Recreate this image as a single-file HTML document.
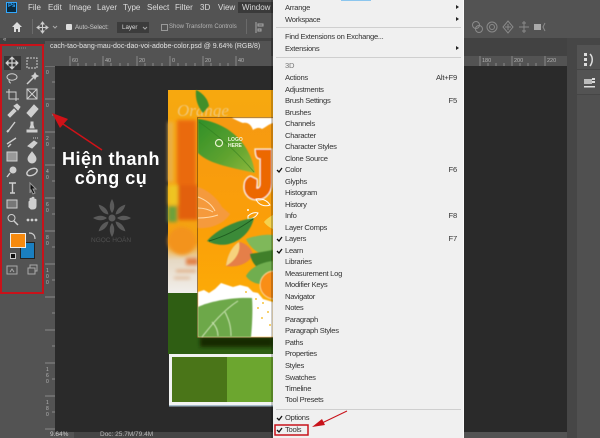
<!DOCTYPE html>
<html><head><meta charset="utf-8">
<style>
html,body{margin:0;padding:0;background:#fff}
#r{position:relative;width:600px;height:438px;overflow:hidden;background:#535353;font-family:"Liberation Sans",sans-serif;filter:blur(.3px)}
#r div{position:absolute}
.t{white-space:nowrap;color:#ddd;font-size:8px}
.m{position:absolute;left:285px;white-space:nowrap;font-size:7.6px;letter-spacing:-.28px;color:#333;line-height:10px}
.k{position:absolute;right:143px;font-size:7.6px;letter-spacing:-.2px;color:#333;line-height:10px}
.sep{left:276px;width:185px;height:1px;background:#cfcfcf}
.mb{top:3px;color:#ddd;font-size:8px;white-space:nowrap}
svg{position:absolute}
</style></head><body>
<div id="r">
<!-- menu bar -->
<div style="left:0;top:0;width:600px;height:15px;background:#535353"></div>
<div style="left:6px;top:2px;width:9px;height:9px;background:#0b2a3e;border:1px solid #31a8ff"></div>
<div class="t" style="left:8px;top:3px;font-size:6px;font-weight:bold;color:#31a8ff">Ps</div>
<div class="mb" style="left:28px">File</div>
<div class="mb" style="left:48px">Edit</div>
<div class="mb" style="left:69px">Image</div>
<div class="mb" style="left:97px">Layer</div>
<div class="mb" style="left:123px">Type</div>
<div class="mb" style="left:147px">Select</div>
<div class="mb" style="left:175px">Filter</div>
<div class="mb" style="left:200px">3D</div>
<div class="mb" style="left:218px">View</div>
<div style="left:238px;top:2px;width:35px;height:11px;background:#3a3a3a"></div>
<div class="mb" style="left:242px">Window</div>
<!-- options bar -->
<div style="left:0;top:15px;width:600px;height:23px;background:#535353"></div>
<svg style="left:11px;top:21px" width="12" height="12" viewBox="0 0 12 12"><path d="M6 1L1 6h2v5h2V8h2v3h2V6h2z" fill="#ddd"/></svg>
<div style="left:32px;top:19px;width:1px;height:15px;background:#6a6a6a"></div>
<svg style="left:36px;top:21px" width="13" height="13" viewBox="0 0 13 13"><path d="M6.500 1v11M1 6.500h11M6.500 1L5 3h3zM6.500 12L5 10h3zM1 6.500L3 5v3zM12 6.500L10 5v3z" stroke="#ccc" stroke-width="1" fill="#ccc"/></svg>
<svg style="left:52px;top:25px" width="6" height="5" viewBox="0 0 6 5"><path d="M1 1l2 2 2-2" stroke="#aaa" fill="none"/></svg>
<div style="left:66px;top:24px;width:6px;height:6px;background:#ddd;border-radius:1px"></div>
<div class="t" style="left:75px;top:24px;font-size:6.200px;color:#ccc">Auto-Select:</div>
<div style="left:117px;top:22px;width:32px;height:11px;background:#3c3c3c"></div>
<div class="t" style="left:122px;top:24px;font-size:6.200px">Layer</div>
<svg style="left:142px;top:26px" width="6" height="5" viewBox="0 0 6 5"><path d="M1 1l2 2 2-2" stroke="#aaa" fill="none"/></svg>
<div style="left:161px;top:24px;width:5px;height:5px;border:1px solid #999"></div>
<div class="t" style="left:169px;top:24px;font-size:6px;color:#b5b5b5">Show Transform Controls</div>
<div style="left:246px;top:19px;width:1px;height:15px;background:#6a6a6a"></div>
<svg style="left:255px;top:22px" width="10" height="11" viewBox="0 0 10 11"><path d="M1 0v11M3 2h5v2H3zM3 7h3v2H3z" stroke="#aaa" fill="none"/></svg>
<!-- 3D icons -->
<svg style="left:470px;top:20px" width="80" height="14" viewBox="0 0 80 14" fill="none" stroke="#8a8a8a" stroke-width="1">
<circle cx="6" cy="5" r="3.500"/><circle cx="9" cy="9" r="3.500"/>
<circle cx="22" cy="7" r="5"/><circle cx="22" cy="7" r="2.500"/>
<path d="M38 1l5 6-5 6-5-6zM38 4v6M35 7h6"/>
<path d="M49 7h10M54 1v12M52 3h4M52 11h4"/>
<rect x="64" y="4" width="7" height="6" fill="#aaa" stroke="none"/><path d="M75 3l-2 4 2 4"/>
</svg>
<!-- tab bar -->
<div style="left:45px;top:38px;width:522px;height:18px;background:#424242"></div>
<div style="left:45px;top:41px;width:226px;height:15px;background:#535353"></div>
<div class="t" style="left:50px;top:43px;font-size:7px;color:#e2e2e2">cach-tao-bang-mau-doc-dao-voi-adobe-color.psd @ 9.64% (RGB/8)</div>
<!-- rulers -->
<div style="left:45px;top:56px;width:522px;height:10px;background:#535353"></div>
<div style="left:45px;top:56px;width:10px;height:376px;background:#535353"></div>
<svg style="left:45px;top:56px" width="522" height="10" viewBox="0 0 522 10" stroke="#8a8a8a" stroke-width="1">
<path d="M25 0v10M58 0v10M92 0v10M125 0v10M158 0v10M191 0v10M435 0v10M467 0v10M500 0v10M33 7v3M41 7v3M50 7v3M66 7v3M75 7v3M83 7v3M100 7v3M108 7v3M117 7v3M133 7v3M141 7v3M150 7v3M166 7v3M175 7v3M183 7v3M443 7v3M451 7v3M459 7v3M475 7v3M483 7v3M491 7v3"/>
<g fill="#b5b5b5" stroke="none" font-size="5.500" font-family="Liberation Sans"><text x="27" y="6">60</text><text x="60" y="6">40</text><text x="94" y="6">20</text><text x="127" y="6">0</text><text x="160" y="6">20</text><text x="193" y="6">40</text><text x="437" y="6">180</text><text x="469" y="6">200</text><text x="502" y="6">220</text></g>
</svg>
<svg style="left:45px;top:66px" width="10" height="366" viewBox="0 0 10 366" stroke="#8a8a8a">
<path d="M0 0h10M0 33h10M0 66h10M0 99h10M0 132h10M0 165h10M0 198h10M0 231h10M0 264h10M0 297h10M0 330h10M0 363h10M7 16h3M7 49h3M7 82h3M7 115h3M7 148h3M7 181h3M7 214h3M7 247h3M7 280h3M7 313h3M7 346h3"/>
<g fill="#b5b5b5" stroke="none" font-size="5" font-family="Liberation Sans"><text x="1" y="8">0</text><text x="1" y="41">0</text><text x="1" y="74">2</text><text x="1" y="80">0</text><text x="1" y="107">4</text><text x="1" y="113">0</text><text x="1" y="140">6</text><text x="1" y="146">0</text><text x="1" y="173">8</text><text x="1" y="179">0</text><text x="1" y="206">1</text><text x="1" y="212">0</text><text x="1" y="218">0</text><text x="1" y="305">1</text><text x="1" y="311">6</text><text x="1" y="317">0</text><text x="1" y="338">1</text><text x="1" y="344">8</text><text x="1" y="350">0</text></g>
</svg>
<!-- canvas -->
<div style="left:55px;top:66px;width:512px;height:366px;background:#2a2a2a"></div>
<!-- artwork -->
<svg style="left:160px;top:85px" width="113" height="325" viewBox="160 85 113 325">
<defs>
<filter id="b1" x="-30%" y="-30%" width="160%" height="160%"><feGaussianBlur stdDeviation="1.800"/></filter>
<filter id="b2" x="-20%" y="-20%" width="140%" height="140%"><feGaussianBlur stdDeviation=".6"/></filter>
<linearGradient id="lf" x1="0" y1="0" x2="1" y2="1"><stop offset="0" stop-color="#2f8f2a"/><stop offset=".6" stop-color="#5fa32f"/><stop offset="1" stop-color="#8fb93c"/></linearGradient>
<linearGradient id="fr" x1="0" y1="0" x2="0" y2="1"><stop offset="0" stop-color="#f69a12"/><stop offset=".5" stop-color="#fb9f08"/><stop offset="1" stop-color="#fcb106"/></linearGradient>
<linearGradient id="bk" x1="0" y1="0" x2="0" y2="1"><stop offset="0" stop-color="#f7a80f"/><stop offset=".75" stop-color="#f4a112"/><stop offset=".84" stop-color="#e6d9c4"/><stop offset="1" stop-color="#f1efec"/></linearGradient>
</defs>
<rect x="160" y="85" width="113" height="325" fill="#2a2a2a"/>
<!-- green bg -->
<rect x="168" y="292" width="105" height="62" fill="#2f5e13"/>
<rect x="200" y="337" width="73" height="10" fill="#122a06" filter="url(#b1)"/>
<!-- back doc -->
<rect x="168" y="90" width="105" height="203" fill="url(#bk)"/>
<g filter="url(#b1)">
<rect x="177" y="120" width="19" height="65" fill="#ea6a0e"/>
<rect x="178" y="185" width="20" height="35" fill="#e2600c"/>
<rect x="168" y="122" width="5" height="60" fill="#e8b04c"/>
<rect x="168" y="185" width="10" height="20" fill="#eec421"/>
<rect x="168" y="206" width="9" height="16" fill="#6da03a"/>
<circle cx="182" cy="241" r="14" fill="#f3931c"/>
<rect x="186" y="258" width="12" height="7" fill="#e2824a"/>
<rect x="176" y="270" width="20" height="2" fill="#dc9a68"/>
<rect x="174" y="277" width="16" height="2" fill="#dcae88"/>
</g>
<text x="177" y="116" font-size="17" font-family="Liberation Serif" font-style="italic" fill="#ecd4a4" opacity=".7" filter="url(#b2)">Orange</text>
<path d="M196 90c5 2 12 8 13 16-3 3-5 6-6 7-5-6-8-14-7-23z" fill="#3f8f2a" filter="url(#b2)"/>
<!-- front doc -->
<rect x="197" y="117" width="76" height="221" fill="#7a4a10" opacity=".7"/>
<rect x="198" y="118" width="75" height="219" fill="url(#fr)"/>
<!-- top splatter -->
<path d="M232 118h41v5c-4 1-7 4-11 6-3-2-6-1-9 1-2-6-6-8-10-7-3-1-7-3-11-5z" fill="#fff" filter="url(#b2)"/>
<!-- leaf -->
<path d="M198 119C225 122 250 140 255 173C235 168 210 165 198 153z" fill="url(#lf)" filter="url(#b2)"/>
<path d="M199 122c20 14 40 32 55 50" stroke="#2e7a1e" fill="none" opacity=".5"/>
<circle cx="219" cy="143" r="3.500" fill="none" stroke="#e8f3d0" stroke-width="1.200"/>
<text x="228" y="141" font-size="5" font-weight="bold" fill="#eef6dc" font-family="Liberation Sans">LOGO</text>
<text x="228" y="147" font-size="5" font-weight="bold" fill="#eef6dc" font-family="Liberation Sans">HERE</text>
<!-- J -->
<path d="M255 149h17v34c0 12-9 18-17 17-8-1-12-8-11-15 0-5 4-9 7-9l6 3c1 1 0 8 0 9 2 0 3-2 3-4v-25c-3 0-5-2-5-10z" fill="#ec6704" stroke="#fbeedd" stroke-width="1.300" filter="url(#b2)"/>
<path d="M256 199c5-1 11 1 14 6-5 2-12 0-14-6z" fill="none" stroke="#fff"/>
<path d="M248 216c3-3 7-4 10-3-2 4-6 6-10 6z" fill="none" stroke="#fff"/>
<circle cx="248" cy="210" r="1" fill="#fff"/>
<!-- orange slice -->
<path d="M198 187c10 3 20 12 24 20l8 7c-6 10-20 15-32 14z" fill="#f59a3c" filter="url(#b2)"/>
<path d="M198 197c8 3 14 8 17 14M198 208c6 0 12 2 15 4M198 218c8 0 14-1 20-3" stroke="#ffd9a8" fill="none" stroke-width="1"/>
<!-- leaf 2 -->
<path d="M207 241c10-12 30-21 47-23-3 12-11 22-25 26-8 2-16 0-22-3z" fill="#3a8a38" filter="url(#b2)"/>
<path d="M209 241c14-4 30-12 44-22" stroke="#1f5d20" fill="none"/>
<!-- slice small -->
<path d="M226 266c2-12 8-20 14-24 7 2 12 7 13 13-4 8-15 13-27 11z" fill="#e57f48" filter="url(#b2)"/>
<path d="M226 266c1-10 6-20 13-24 2 8-2 18-13 24z" fill="#f7d27c" filter="url(#b2)"/>
<!-- right leaves -->
<path d="M246 239c8-3 20-5 27-4v22c-10 0-22-7-27-18z" fill="#7fb85a" filter="url(#b2)"/>
<path d="M250 254l23-4v24c-10 0-21-8-23-20z" fill="#3f7f2a" filter="url(#b2)"/>
<path d="M246 276c4-8 15-14 27-15v22c-10 3-22 1-27-7z" fill="#6fae50" filter="url(#b2)"/>
<circle cx="274" cy="285" r="14" fill="#f98e12" stroke="#fcd48a" filter="url(#b2)"/>
<path d="M264 222c3-4 9-7 9-7v14c-3-1-7-4-9-7z" fill="#f4d24e"/>
<!-- white lower -->
<path d="M198 292l6-2 5 3 6-4 6-6 6 2 6 2 7-2 8 2 5 5 5 1 5 6 10 3v35h-75z" fill="#fff" filter="url(#b2)"/>
<g fill="#f6c440"><circle cx="263" cy="303" r="1"/><circle cx="258" cy="308" r="1"/><circle cx="268" cy="312" r="1"/><circle cx="262" cy="318" r="1"/><circle cx="270" cy="325" r="1"/><circle cx="256" cy="299" r="1"/><circle cx="246" cy="292" r="1"/></g>
<!-- large bottom leaf -->
<path d="M198 307c12-6 36-10 54-9 1 12 0 28-1 39h-53z" fill="#6da84a" filter="url(#b2)"/>
<path d="M202 337c8-10 20-26 36-36M225 312c4 8 6 14 6 24M212 322c4 4 6 8 6 14" stroke="#cfe6b8" stroke-width="1" fill="none" filter="url(#b2)"/>
<!-- swatches -->
<rect x="169" y="354" width="104" height="51" fill="#f2f3f2"/>
<rect x="172" y="357" width="55" height="45" fill="#4a7518"/>
<rect x="227" y="357" width="46" height="45" fill="#6ca62f"/>
<rect x="169" y="405" width="104" height="1.500" fill="#a6bccb"/>
</svg>
<!-- watermark -->
<svg style="left:92px;top:198px" width="40" height="40" viewBox="-20 -20 40 40" fill="#5a5a5a">
<circle r="3.500"/>
<path d="M0-5c-3-4-3-9 0-14 3 5 3 10 0 14z"/>
<path d="M0-5c-3-4-3-9 0-14 3 5 3 10 0 14z" transform="rotate(45)"/>
<path d="M0-5c-3-4-3-9 0-14 3 5 3 10 0 14z" transform="rotate(90)"/>
<path d="M0-5c-3-4-3-9 0-14 3 5 3 10 0 14z" transform="rotate(135)"/>
<path d="M0-5c-3-4-3-9 0-14 3 5 3 10 0 14z" transform="rotate(180)"/>
<path d="M0-5c-3-4-3-9 0-14 3 5 3 10 0 14z" transform="rotate(225)"/>
<path d="M0-5c-3-4-3-9 0-14 3 5 3 10 0 14z" transform="rotate(270)"/>
<path d="M0-5c-3-4-3-9 0-14 3 5 3 10 0 14z" transform="rotate(315)"/>
</svg>
<div class="t" style="left:91px;top:237px;font-size:6.500px;color:#505050">NGỌC HOÀN</div>
<!-- label -->
<div style="left:50px;top:150px;width:122px;text-align:center;color:#fff;font-weight:bold;font-size:18px;letter-spacing:.5px;line-height:19px">Hiện thanh<br>công cụ</div>
<!-- red arrow -->
<svg style="left:45px;top:105px" width="60" height="50" viewBox="45 105 60 50"><path d="M102 150L60 122" stroke="#d01218" stroke-width="1.500"/><path d="M52 113l16 6-8 9z" fill="#d01218"/></svg>
<!-- toolbar -->
<div style="left:0;top:38px;width:45px;height:394px;background:#535353"></div>
<div style="left:0;top:38px;width:45px;height:6px;background:#424242"></div>
<div class="t" style="left:3px;top:37px;font-size:6px;color:#bbb">«</div>
<div style="left:0;top:44px;width:44px;height:250px;border:2px solid #c8121a;box-sizing:border-box;background:#535353"></div>
<div style="left:4px;top:56px;width:17px;height:14px;background:#383838"></div>
<svg style="left:0;top:44px" width="45" height="250" viewBox="0 44 45 250" fill="none" stroke="#cfcfcf" stroke-width="1">
<path d="M17 48h10" stroke="#8a8a8a" stroke-dasharray="1 1"/>
<!-- move / marquee -->
<path d="M12 58v10M7 63h10" stroke-width="1.200"/><path d="M12 57l-2 2h4zM12 69l-2-2h4zM6 63l2-2v4zM18 63l-2-2v4z" fill="#cfcfcf"/>
<rect x="27" y="58" width="10" height="10" stroke-dasharray="2 1"/>
<!-- lasso / wand -->
<ellipse cx="12" cy="77" rx="5" ry="3.200"/><path d="M9 80c0 2 1 3 2 3"/>
<path d="M27 84l7-7" stroke-width="1.500"/><path d="M35 73l1 2 2 1-2 1-1 2-1-2-2-1 2-1z" fill="#cfcfcf"/>
<!-- crop / slice -->
<path d="M9 89v10h10M6 92h10v9"/>
<rect x="27" y="89" width="10" height="10"/><path d="M27 89l10 10M37 89l-10 10"/>
<!-- eyedropper / bandage -->
<path d="M8 115l6-6 2 2-6 6z" fill="#cfcfcf"/><path d="M14 106l3-2 3 3-2 3z" fill="#cfcfcf"/>
<path d="M27 113l7-8 4 4-7 8z" fill="#cfcfcf"/>
<!-- brush / stamp -->
<path d="M9 130l6-8" stroke-width="1.400"/><path d="M9 130l-2 2" stroke-width="2"/>
<path d="M27 130h10v2H27zM30 128h4l-1-3v-3h-2v3z" fill="#cfcfcf"/>
<!-- history / eraser -->
<path d="M7 144l9-6M8 147l3-3" stroke-width="1.400"/>
<path d="M28 146l6-5 3 2-5 5z" fill="#cfcfcf"/><path d="M33 138h5" stroke-dasharray="1 1"/>
<!-- gradient / paint -->
<rect x="7" y="152" width="10" height="9" fill="#999"/>
<path d="M32 152c-3 4-4 5-4 7a4 4 0 0 0 8 0c0-2-1-3-4-7z" fill="#cfcfcf"/>
<!-- dodge / smudge -->
<circle cx="13" cy="170" r="3" fill="#cfcfcf"/><path d="M10 173l-3 4" stroke-width="1.400"/>
<ellipse cx="32" cy="172" rx="5.500" ry="3.200" stroke-width="1.400" transform="rotate(-25 32 172)"/>
<!-- type / arrow -->
<path d="M9 183h7M12.500 183v10M10 193h5" stroke-width="1.400"/>
<path d="M30 183l6 6h-3l2 4-2 1-2-4-1 3z" fill="#111" stroke="#999"/>
<!-- rect / hand -->
<rect x="7" y="200" width="10" height="8" fill="#777"/>
<path d="M29 207v-5c0-1 1-1 1 0v-3c0-1 2-1 2 0v-1c0-1 2-1 2 0v2c0-1 2-1 2 0v6c0 2-1 3-3 3h-2z" fill="#cfcfcf"/>
<!-- zoom / dots -->
<circle cx="11.500" cy="218" r="3.500"/><path d="M14 221l4 4" stroke-width="1.400"/>
<circle cx="28" cy="220" r=".9" fill="#cfcfcf"/><circle cx="32" cy="220" r=".9" fill="#cfcfcf"/><circle cx="36" cy="220" r=".9" fill="#cfcfcf"/>
</svg>
<div style="left:20px;top:242px;width:13px;height:15px;background:#1a7fc0;border:1px solid #222"></div>
<div style="left:10px;top:233px;width:14px;height:13px;background:#f78a0e;border:1px solid #eee"></div>
<svg style="left:28px;top:231px" width="9" height="9" viewBox="0 0 9 9"><path d="M1 2c4 0 6 2 6 6" fill="none" stroke="#ccc" stroke-width="1.200"/></svg>
<div style="left:10px;top:253px;width:4px;height:4px;background:#111;border:1px solid #ccc"></div>
<svg style="left:0;top:262px" width="45" height="16" viewBox="0 0 45 16" fill="none" stroke="#a8a8a8"><rect x="7" y="4" width="10" height="8"/><path d="M10 10l2-3 2 3"/><rect x="28" y="6" width="7" height="6"/><path d="M30 6V3h7v6h-2"/></svg>
<!-- right panels -->
<div style="left:567px;top:38px;width:33px;height:400px;background:#464646"></div>
<div style="left:577px;top:45px;width:23px;height:24px;background:#535353"></div>
<div style="left:577px;top:70px;width:23px;height:24px;background:#535353"></div>
<div style="left:577px;top:95px;width:23px;height:343px;background:#505050"></div>
<svg style="left:582px;top:52px" width="14" height="36" viewBox="0 0 14 36" fill="#ddd"><rect x="2" y="1" width="3" height="3"/><rect x="2" y="6" width="3" height="3"/><rect x="2" y="11" width="3" height="3"/><path d="M8 2c3 3 3 8 0 12" stroke="#ddd" fill="none" stroke-width="1.500"/><rect x="2" y="27" width="8" height="5" fill="#bbb"/><path d="M2 34h11v1.500H2z"/><rect x="10" y="26" width="3" height="2"/><rect x="10" y="29" width="3" height="2"/></svg>
<!-- status bar -->
<div style="left:45px;top:432px;width:228px;height:6px;background:#535353"></div>
<div style="left:74px;top:432px;width:199px;height:6px;background:#454545"></div>
<div class="t" style="left:50px;top:431px;font-size:6.500px;color:#ccc">9.64%</div>
<div class="t" style="left:100px;top:431px;font-size:6.500px;color:#bbb">Doc: 25.7M/79.4M</div>
<!-- dropdown menu -->
<div style="left:271px;top:0;width:2px;height:438px;background:rgba(0,0,0,.2)"></div>
<div style="left:273px;top:0;width:191px;height:438px;background:#f0f0f0;border-right:1px solid #fafafa;box-sizing:border-box"></div>
<div style="left:341px;top:0;width:30px;height:1px;background:#8cc6ee"></div>
<span class="m" style="top:3px">Arrange</span>
<span class="m" style="top:15px">Workspace</span>
<span class="m" style="top:32px">Find Extensions on Exchange...</span>
<span class="m" style="top:44px">Extensions</span>
<span class="m" style="top:61px;color:#777">3D</span>
<span class="m" style="top:73px">Actions</span>
<span class="m" style="top:85px">Adjustments</span>
<span class="m" style="top:96px">Brush Settings</span>
<span class="m" style="top:108px">Brushes</span>
<span class="m" style="top:119px">Channels</span>
<span class="m" style="top:131px">Character</span>
<span class="m" style="top:142px">Character Styles</span>
<span class="m" style="top:154px">Clone Source</span>
<span class="m" style="top:165px">Color</span>
<span class="m" style="top:177px">Glyphs</span>
<span class="m" style="top:188px">Histogram</span>
<span class="m" style="top:200px">History</span>
<span class="m" style="top:211px">Info</span>
<span class="m" style="top:223px">Layer Comps</span>
<span class="m" style="top:234px">Layers</span>
<span class="m" style="top:246px">Learn</span>
<span class="m" style="top:257px">Libraries</span>
<span class="m" style="top:269px">Measurement Log</span>
<span class="m" style="top:280px">Modifier Keys</span>
<span class="m" style="top:292px">Navigator</span>
<span class="m" style="top:303px">Notes</span>
<span class="m" style="top:315px">Paragraph</span>
<span class="m" style="top:326px">Paragraph Styles</span>
<span class="m" style="top:338px">Paths</span>
<span class="m" style="top:349px">Properties</span>
<span class="m" style="top:361px">Styles</span>
<span class="m" style="top:373px">Swatches</span>
<span class="m" style="top:384px">Timeline</span>
<span class="m" style="top:395px">Tool Presets</span>
<span class="m" style="top:413px">Options</span>
<span class="m" style="top:425px">Tools</span>
<span class="k" style="top:73px">Alt+F9</span>
<span class="k" style="top:96px">F5</span>
<span class="k" style="top:165px">F6</span>
<span class="k" style="top:211px">F8</span>
<span class="k" style="top:234px">F7</span>
<div class="sep" style="top:27px"></div>
<div class="sep" style="top:57px"></div>
<div class="sep" style="top:409px"></div>
<svg style="left:273px;top:0" width="191" height="438" viewBox="273 0 191 438">
<path d="M456 5l3 2-3 2zM456 17l3 2-3 2zM456 46l3 2-3 2z" fill="#222"/>
<g fill="none" stroke="#111" stroke-width="1.300"><path d="M277 170l2 2 3-4M277 239l2 2 3-4M277 251l2 2 3-4M277 418l2 2 3-4M277 430l2 2 3-4"/></g>
<rect x="275" y="425" width="33" height="10" fill="none" stroke="#c8121a" stroke-width="1.500"/>
<path d="M347 411L322 423" stroke="#c8121a" stroke-width="1"/><path d="M312 427l10-8 3 6z" fill="#c8121a"/>
</svg>
</div>
</body></html>
